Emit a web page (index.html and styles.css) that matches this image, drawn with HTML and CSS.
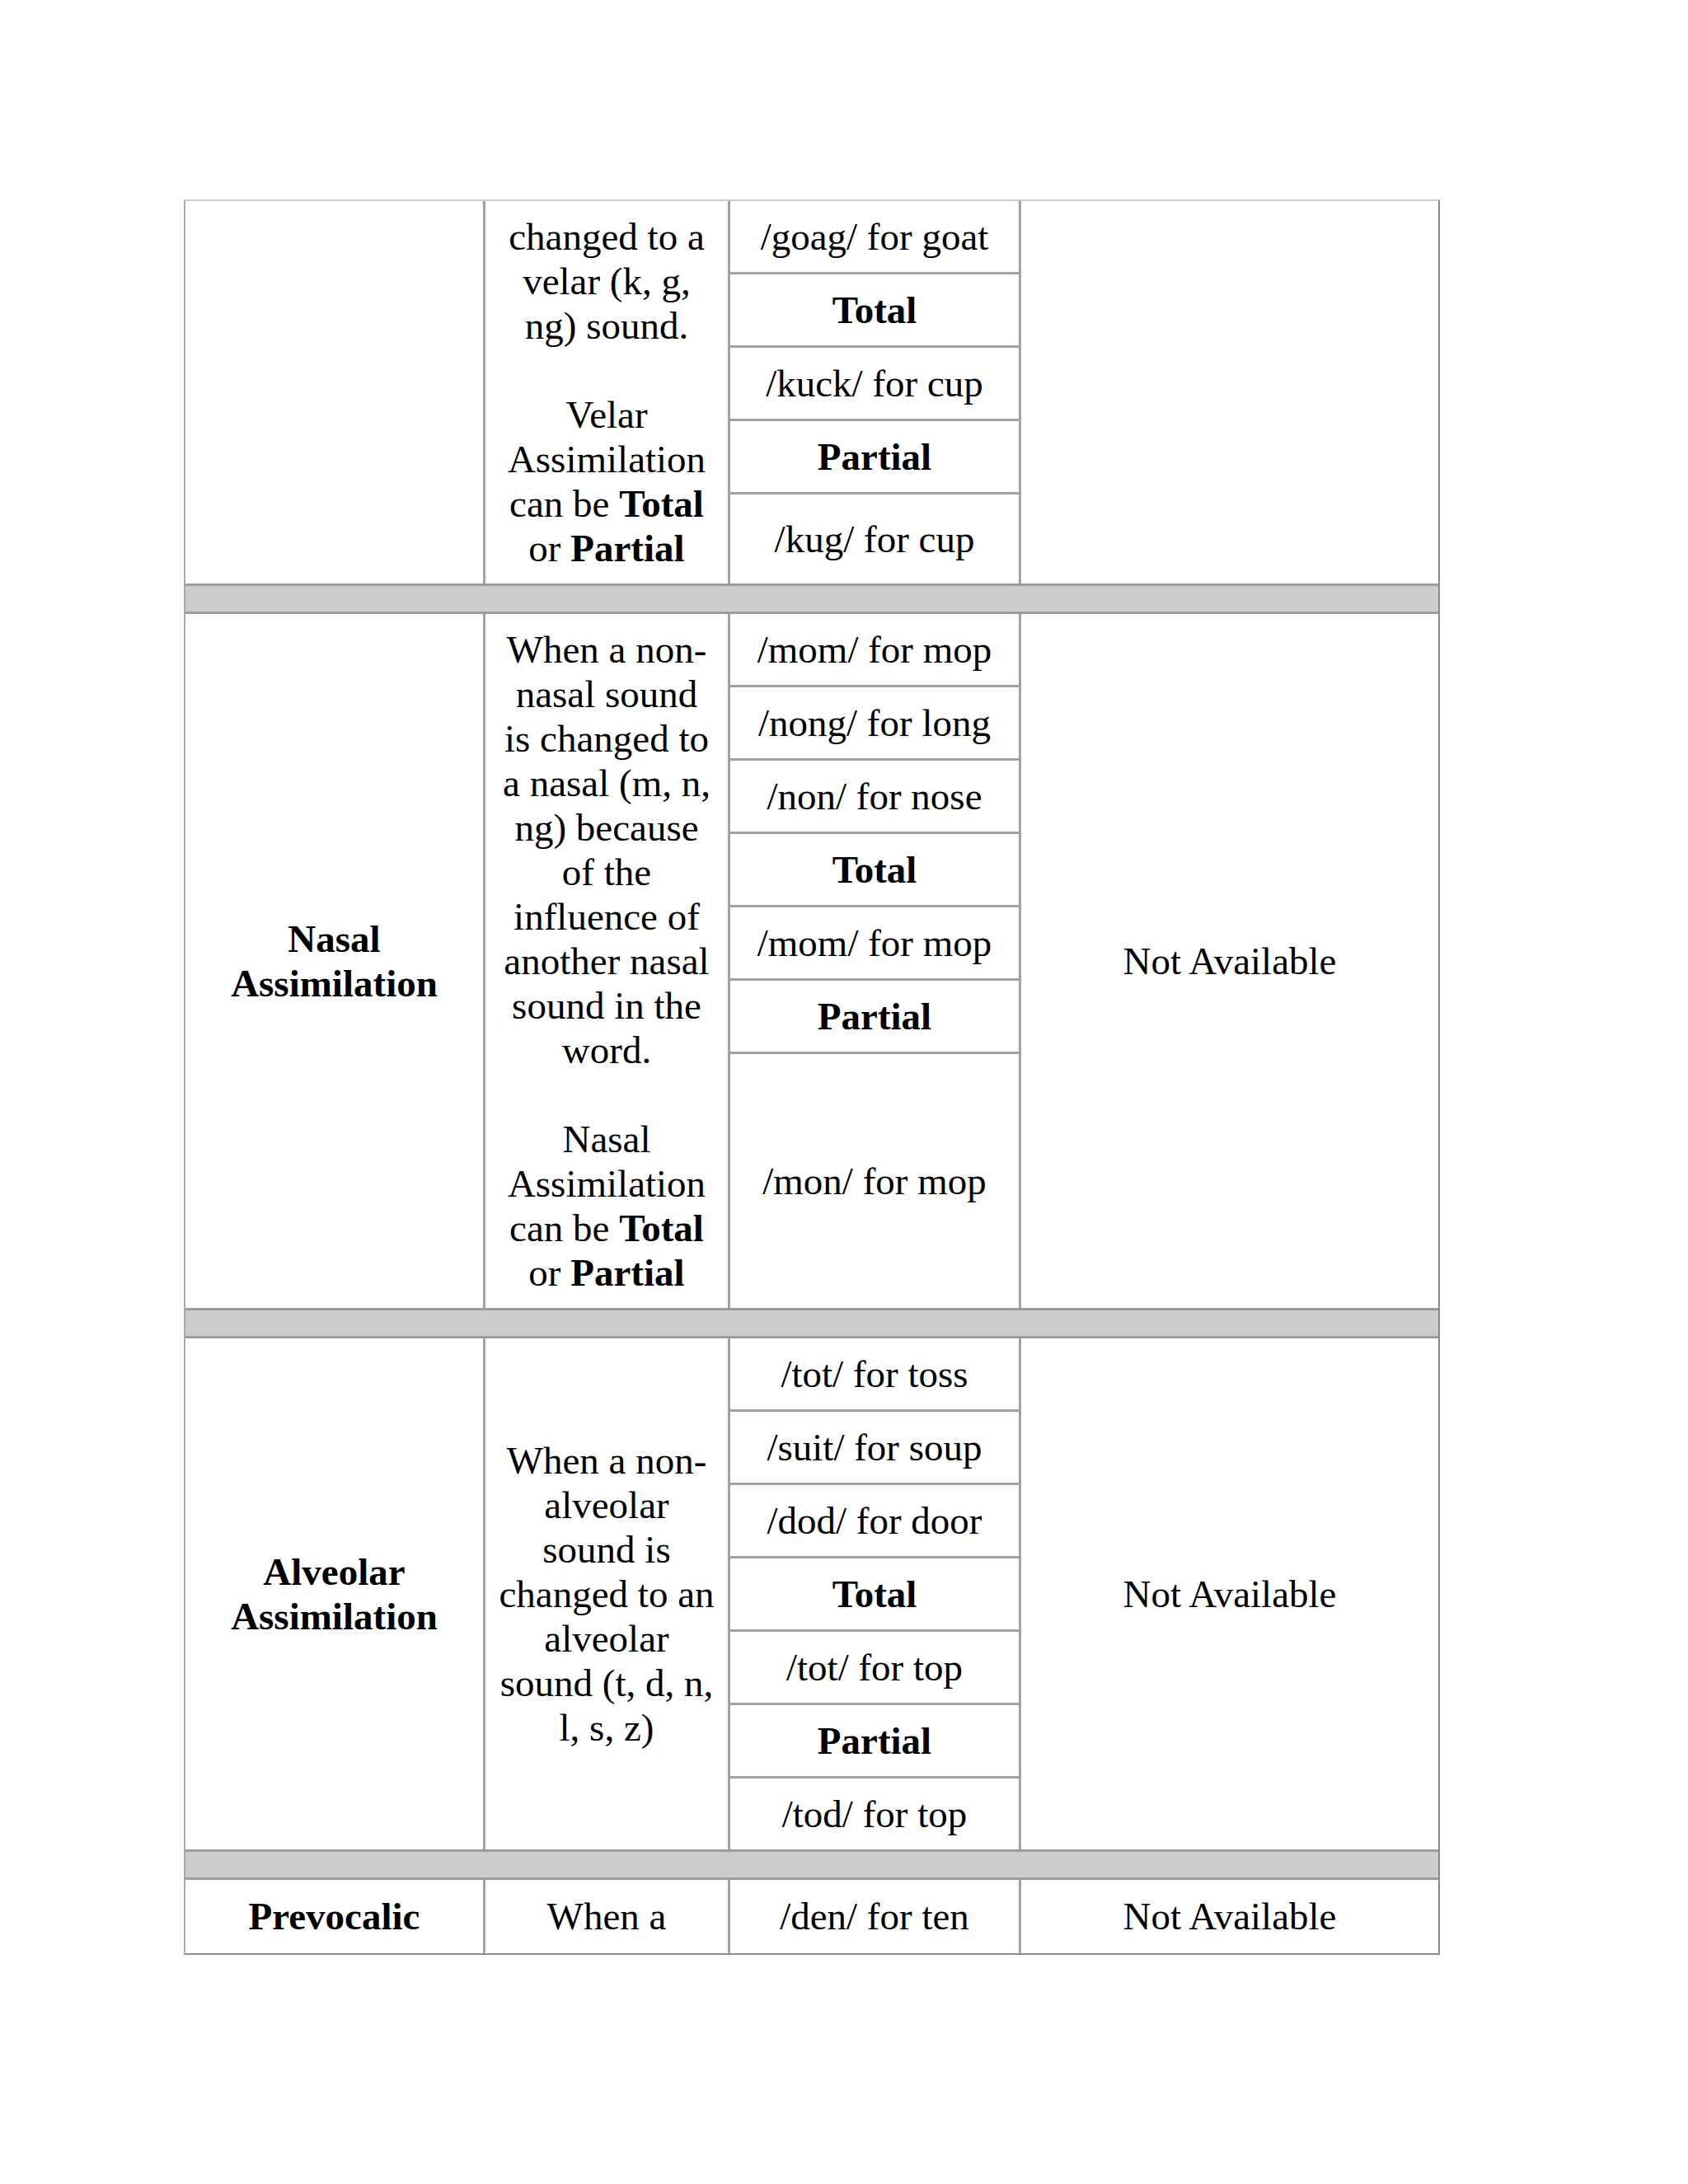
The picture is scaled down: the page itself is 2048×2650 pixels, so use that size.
FILE: index.html
```html
<!DOCTYPE html>
<html lang="en">
<head>
<meta charset="utf-8">
<title>Assimilation processes</title>
<link rel="stylesheet" href="styles.css">
</head>
<body>
<div class="sheet">
  <div class="table">
    <div class="sect">
      <div class="cell term"></div>
      <div class="cell desc"><p class="txt">changed to a<br>velar (k, g,<br>ng) sound.<br><br>Velar<br>Assimilation<br>can be <b>Total</b><br>or <b>Partial</b></p></div>
      <div class="cell ex">
        <div class="item"><p class="txt">/goag/ for goat</p></div>
        <div class="item"><p class="txt"><b>Total</b></p></div>
        <div class="item"><p class="txt">/kuck/ for cup</p></div>
        <div class="item"><p class="txt"><b>Partial</b></p></div>
        <div class="item last"><p class="txt">/kug/ for cup</p></div>
      </div>
      <div class="cell avail"></div>
    </div>
    <div class="bar"></div>
    <div class="sect">
      <div class="cell term"><p class="txt"><b>Nasal<br>Assimilation</b></p></div>
      <div class="cell desc"><p class="txt">When a non-<br>nasal sound<br>is changed to<br>a nasal (m, n,<br>ng) because<br>of the<br>influence of<br>another nasal<br>sound in the<br>word.<br><br>Nasal<br>Assimilation<br>can be <b>Total</b><br>or <b>Partial</b></p></div>
      <div class="cell ex">
        <div class="item"><p class="txt">/mom/ for mop</p></div>
        <div class="item"><p class="txt">/nong/ for long</p></div>
        <div class="item"><p class="txt">/non/ for nose</p></div>
        <div class="item"><p class="txt"><b>Total</b></p></div>
        <div class="item"><p class="txt">/mom/ for mop</p></div>
        <div class="item"><p class="txt"><b>Partial</b></p></div>
        <div class="item last"><p class="txt">/mon/ for mop</p></div>
      </div>
      <div class="cell avail"><p class="txt">Not Available</p></div>
    </div>
    <div class="bar"></div>
    <div class="sect">
      <div class="cell term"><p class="txt"><b>Alveolar<br>Assimilation</b></p></div>
      <div class="cell desc"><p class="txt">When a non-<br>alveolar<br>sound is<br>changed to an<br>alveolar<br>sound (t, d, n,<br>l, s, z)</p></div>
      <div class="cell ex">
        <div class="item"><p class="txt">/tot/ for toss</p></div>
        <div class="item"><p class="txt">/suit/ for soup</p></div>
        <div class="item"><p class="txt">/dod/ for door</p></div>
        <div class="item"><p class="txt"><b>Total</b></p></div>
        <div class="item"><p class="txt">/tot/ for top</p></div>
        <div class="item"><p class="txt"><b>Partial</b></p></div>
        <div class="item last"><p class="txt">/tod/ for top</p></div>
      </div>
      <div class="cell avail"><p class="txt">Not Available</p></div>
    </div>
    <div class="bar"></div>
    <div class="sect final">
      <div class="cell term"><p class="txt"><b>Prevocalic</b></p></div>
      <div class="cell desc"><p class="txt">When a</p></div>
      <div class="cell ex">
        <div class="item last"><p class="txt">/den/ for ten</p></div>
      </div>
      <div class="cell avail"><p class="txt">Not Available</p></div>
    </div>
  </div>
</div>
</body>
</html>
```

FILE: styles.css
```css
html, body {
  margin: 0;
  background: #ffffff;
}

body {
  font-family: "Liberation Serif", "Times New Roman", serif;
  font-size: 47px;
  line-height: 54px;
  color: #000000;
}

.sheet {
  padding: 242px 0 0 223px;
}

.table {
  box-sizing: border-box;
  width: 1524px;
  border-style: solid;
  border-width: 2px;
  border-color: #cdcdcd #8c8c8c #8c8c8c #a8a8a8;
}

.sect {
  display: grid;
  grid-template-columns: 361px 297px 353px 509px;
}

.txt {
  margin: 0;
  text-align: center;
  white-space: nowrap;
}

.cell {
  box-sizing: border-box;
  display: flex;
  flex-direction: column;
  justify-content: center;
  align-items: center;
}

.cell + .cell {
  border-left: 3px solid #a2a2a2;
}

.term,
.desc,
.avail {
  padding: 16px 4px;
}

.ex {
  justify-content: flex-start;
  align-items: stretch;
}

.item {
  box-sizing: border-box;
  display: flex;
  align-items: center;
  justify-content: center;
  padding: 16px 4px;
}

.item + .item {
  border-top: 3px solid #a2a2a2;
}

.item.last {
  flex: 1 1 auto;
}

.final .term,
.final .desc,
.final .avail,
.final .item {
  padding: 17px 4px 18px;
}

.bar {
  height: 31px;
  background: #cccccc;
  border-top: 3px solid #9c9c9c;
  border-bottom: 3px solid #9c9c9c;
}
```
